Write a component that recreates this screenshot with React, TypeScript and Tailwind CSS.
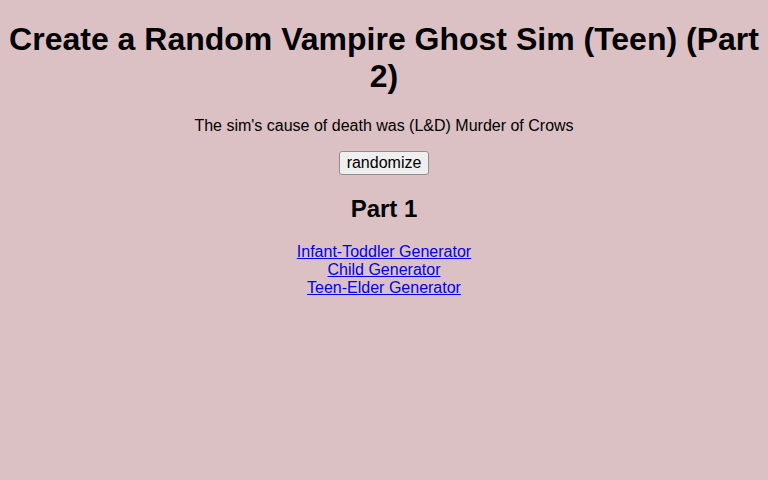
const links = [
  { label: "Infant-Toddler Generator", href: "#infant-toddler" },
  { label: "Child Generator", href: "#child" },
  { label: "Teen-Elder Generator", href: "#teen-elder" },
];

export default function App() {
  return (
    <div className="min-h-screen bg-[#dcc1c4] text-center font-['Liberation_Sans',Arial,sans-serif] text-base leading-[normal] text-black">
      <div className="flow-root px-2">
        <h1 className="my-[21.44px] text-[32px] font-bold leading-[normal]">
          Create a Random Vampire Ghost Sim (Teen) (Part 2)
        </h1>
        <p className="my-[16px]">The sim's cause of death was (L&amp;D) Murder of Crows</p>
        <div className="my-[16px]">
          <button
            type="button"
            className="rounded-[3px] border border-[#8f8f8f] bg-[#efefef] px-[7px] py-[2px] text-base leading-[normal] text-black"
          >
            randomize
          </button>
        </div>
        <h2 className="my-[19.92px] text-2xl font-bold leading-[normal]">Part 1</h2>
        <div className="flex flex-col items-center">
          {links.map((link) => (
            <a key={link.href} href={link.href} className="text-[#0000ee] underline">
              {link.label}
            </a>
          ))}
        </div>
      </div>
    </div>
  );
}
